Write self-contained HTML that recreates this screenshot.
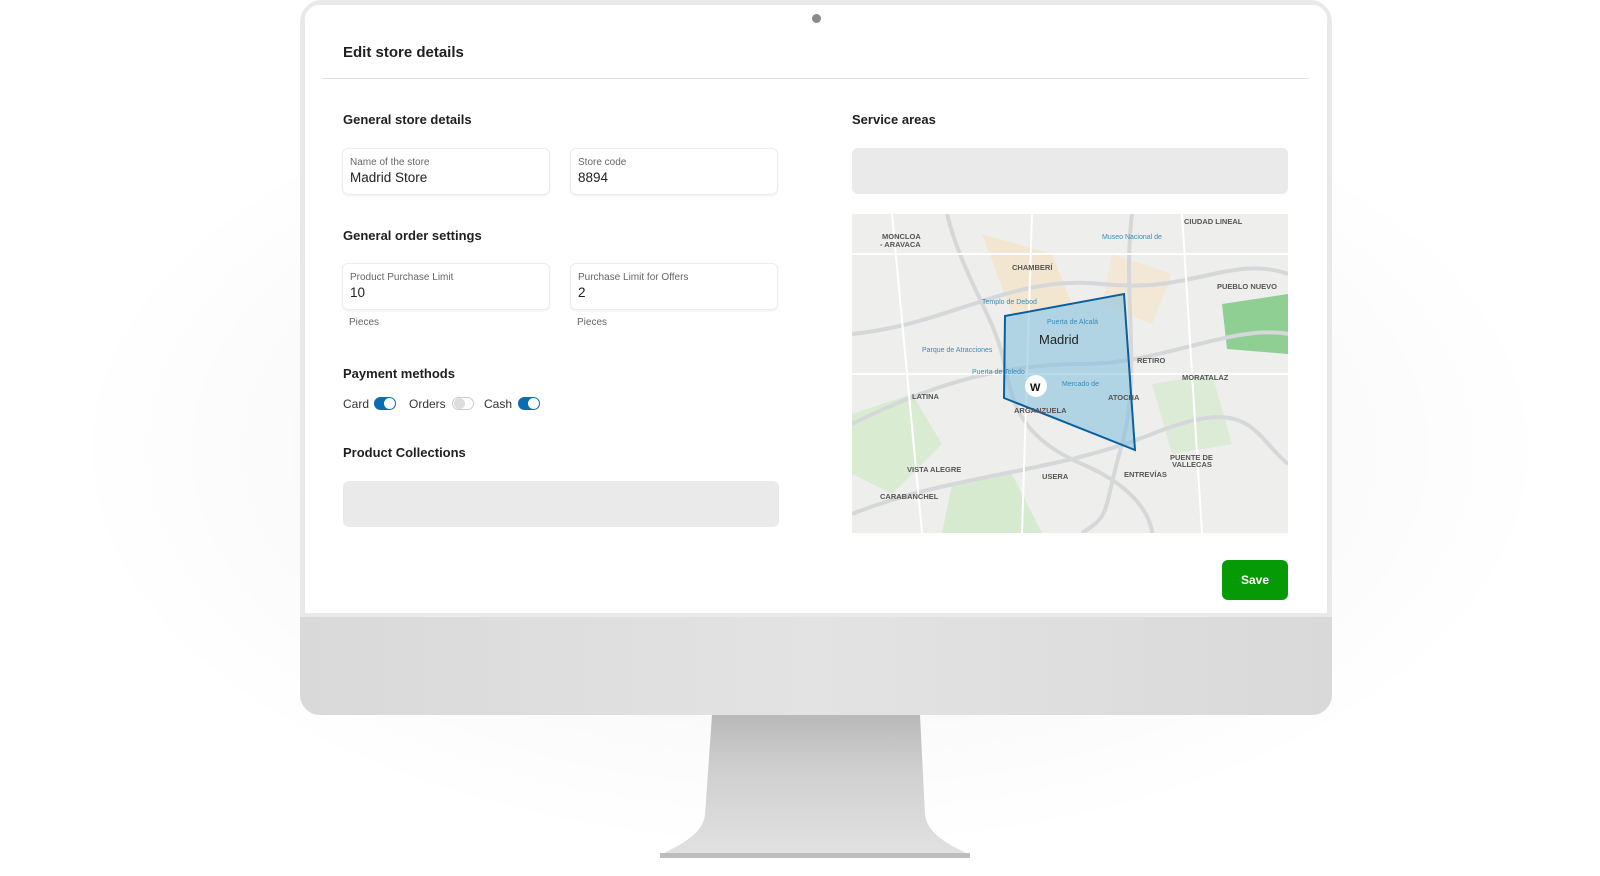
<!DOCTYPE html>
<html><head><meta charset="utf-8"><style>
*{margin:0;padding:0;box-sizing:border-box}
body{width:1600px;height:876px;overflow:hidden;background:#fff;font-family:"Liberation Sans",Arial,sans-serif;position:relative;color:#1f1f1f}
.shadow{position:absolute;left:60px;top:40px;width:1500px;height:820px;border-radius:50%;background:radial-gradient(ellipse at center,rgba(0,0,0,.06),rgba(0,0,0,0) 70%)}
.frame{position:absolute;left:300px;top:0;width:1032px;height:715px;border-radius:22px;background:#e9e9e9}
.chin{position:absolute;left:300px;top:617px;width:1032px;height:98px;background:linear-gradient(90deg,#d9d9d9,#e3e3e3 50%,#d9d9d9);border-radius:0 0 20px 20px}
.screen{position:absolute;left:305px;top:5px;width:1022px;height:608px;background:#fff;border-radius:14px 14px 0 0}
.cam{position:absolute;left:812px;top:14px;width:9px;height:9px;border-radius:50%;background:#8a8a8a}
.stand{position:absolute;left:660px;top:715px;width:310px;height:143px}
h1{position:absolute;left:343px;top:44px;font-size:15px;font-weight:bold}
.hr{position:absolute;left:322px;top:78px;width:987px;height:1px;background:#e2e2e2}
.h2{position:absolute;font-size:13px;font-weight:bold}
.field{position:absolute;width:208px;height:47px;border:1px solid #ececec;border-radius:6px;box-shadow:0 1px 2px rgba(0,0,0,.06)}
.field .l{position:absolute;left:7px;top:8px;font-size:10px;color:#666}
.field .v{position:absolute;left:7px;top:21px;font-size:13.5px;color:#222}
.small{position:absolute;font-size:10px;color:#666}
.lab{position:absolute;font-size:12px;color:#333;top:397px}
.tog{position:absolute;top:397px;width:22px;height:13px;border-radius:7px;background:#0a6db0}
.tog i{position:absolute;right:1px;top:1px;width:11px;height:11px;border-radius:50%;background:#fff}
.tog.off{background:#fff;border:1px solid #ccc}
.tog.off i{left:1px;top:0;background:#ddd}
.grey{position:absolute;background:#eaeaea;border-radius:6px}
.save{position:absolute;left:1222px;top:560px;width:66px;height:40px;background:#069a06;border-radius:6px;color:#fff;font-size:12px;font-weight:bold;text-align:center;line-height:40px}
</style></head><body>
<div class="shadow"></div>
<div class="frame"></div>
<div class="chin"></div>
<div class="screen"></div>
<div class="cam"></div>
<svg class="stand" viewBox="0 0 310 143"><defs><linearGradient id="sg" x1="0" y1="0" x2="0" y2="1"><stop offset="0" stop-color="#b9b9b9"/><stop offset=".4" stop-color="#d0d0d0"/><stop offset="1" stop-color="#e2e2e2"/></linearGradient></defs><path d="M52 0H260L265 100C268 120 290 130 310 140V143H0V140C20 130 42 120 45 100Z" fill="url(#sg)"/><rect x="0" y="138" width="310" height="5" fill="#bdbdbd"/></svg>

<h1>Edit store details</h1>
<div class="hr"></div>
<div class="h2" style="left:343px;top:112px">General store details</div>
<div class="field" style="left:342px;top:148px"><div class="l">Name of the store</div><div class="v">Madrid Store</div></div>
<div class="field" style="left:570px;top:148px"><div class="l">Store code</div><div class="v">8894</div></div>
<div class="h2" style="left:343px;top:228px">General order settings</div>
<div class="field" style="left:342px;top:263px"><div class="l">Product Purchase Limit</div><div class="v">10</div></div>
<div class="field" style="left:570px;top:263px"><div class="l">Purchase Limit for Offers</div><div class="v">2</div></div>
<div class="small" style="left:349px;top:317px">Pieces</div>
<div class="small" style="left:577px;top:317px">Pieces</div>
<div class="h2" style="left:343px;top:366px">Payment methods</div>
<div class="lab" style="left:343px">Card</div><div class="tog" style="left:374px"><i></i></div>
<div class="lab" style="left:409px">Orders</div><div class="tog off" style="left:452px"><i></i></div>
<div class="lab" style="left:484px">Cash</div><div class="tog" style="left:518px"><i></i></div>
<div class="h2" style="left:343px;top:445px">Product Collections</div>
<div class="grey" style="left:343px;top:481px;width:436px;height:46px"></div>
<div class="h2" style="left:852px;top:112px">Service areas</div>
<div class="grey" style="left:852px;top:148px;width:436px;height:46px"></div>

<svg style="position:absolute;left:852px;top:214px" width="436" height="319" viewBox="0 0 436 319">
<rect width="436" height="319" fill="#eeefec"/>
<path d="M370 90L436 80V140L375 135Z" fill="#8fcf94"/>
<path d="M0 200L60 180L90 230L40 280L0 260Z" fill="#d9ecd2"/>
<path d="M100 270L160 260L190 319H90Z" fill="#d6ead0"/>
<path d="M300 170L360 160L380 230L320 240Z" fill="#dcebd6"/>
<path d="M130 20L200 40L220 90L160 100Z" fill="#f5e3c6" opacity=".7"/>
<path d="M260 40L320 60L300 110L250 90Z" fill="#f5e3c6" opacity=".6"/>
<g stroke="#d5d7d9" stroke-width="4" fill="none">
<path d="M95 0C110 60 140 100 150 140S160 220 230 250S300 319 300 319"/>
<path d="M0 210C80 170 150 150 230 150S380 110 436 120"/>
<path d="M280 0C270 80 290 160 270 230S260 300 230 319"/>
<path d="M0 120C100 110 160 60 250 70S380 40 436 60"/>
<path d="M0 300C100 260 200 260 300 220S400 220 436 250"/>
</g>
<g stroke="#fff" stroke-width="2" fill="none">
<path d="M40 0L70 319M180 0L170 319M330 0L350 319M0 160H436M0 40H436"/>
</g>
<path d="M153 102L272 80L283 236L152 184Z" fill="#7fbde0" fill-opacity=".55" stroke="#0a5f9e" stroke-width="2"/>
<circle cx="184" cy="172" r="11" fill="#fff"/>
<text x="178" y="177" font-size="11" font-weight="bold" fill="#111" font-family="Liberation Sans">W</text>
<g font-family="Liberation Sans" font-size="7.5" font-weight="bold" fill="#555">
<text x="30" y="25">MONCLOA</text><text x="28" y="33">- ARAVACA</text>
<text x="332" y="10">CIUDAD LINEAL</text><text x="160" y="56">CHAMBERÍ</text>
<text x="365" y="75">PUEBLO NUEVO</text><text x="285" y="149">RETIRO</text>
<text x="330" y="166">MORATALAZ</text><text x="60" y="185">LATINA</text>
<text x="162" y="199">ARGANZUELA</text><text x="256" y="186">ATOCHA</text>
<text x="318" y="246">PUENTE DE</text><text x="320" y="253">VALLECAS</text>
<text x="190" y="265">USERA</text><text x="28" y="285">CARABANCHEL</text>
<text x="55" y="258">VISTA ALEGRE</text><text x="272" y="263">ENTREVÍAS</text>
</g>
<text x="187" y="130" font-family="Liberation Sans" font-size="13" fill="#222">Madrid</text>
<g font-family="Liberation Sans" font-size="7" fill="#3a8bb5">
<text x="195" y="110">Puerta de Alcalá</text><text x="250" y="25">Museo Nacional de</text><text x="130" y="90">Templo de Debod</text>
<text x="70" y="138">Parque de Atracciones</text><text x="210" y="172">Mercado de</text><text x="120" y="160">Puerta de Toledo</text>
</g>
</svg>
<div class="save">Save</div>
</body></html>
